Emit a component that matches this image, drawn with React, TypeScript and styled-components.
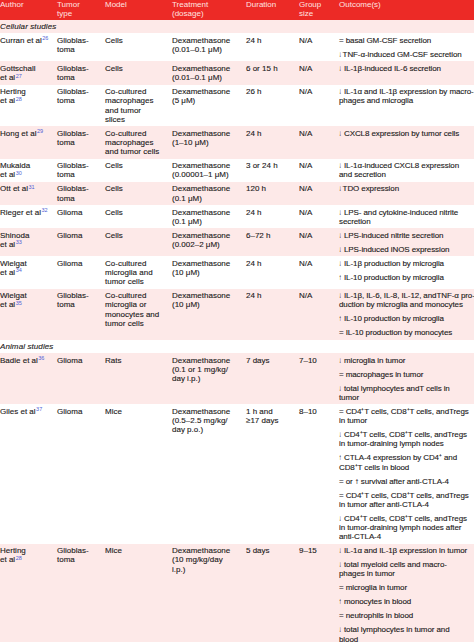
import React from 'react';
import styled, { createGlobalStyle } from 'styled-components';

const GlobalStyle = createGlobalStyle`
    html, body {
        margin: 0;
        padding: 0;
        background: #ffffff;
        overflow: hidden;
    }
    body {
        font-family: "Liberation Sans", Arial, sans-serif;
        color: #1c1a1a;
    }
`;

// shared column template so header and body rows line up
const COLUMNS = '57px 48px 67px 74px 53px 40px 1fr';

const Table = styled.div`
    width: 474px;
    font-size: 8px;
    line-height: 9.2px;
    -webkit-text-stroke: 0.12px currentColor;
`;

const HeaderRow = styled.div`
    display: grid;
    grid-template-columns: ${COLUMNS};
    background: #ec2a26;
    color: #ffe3e0;
    padding: 0 0 1.6px;
    -webkit-text-stroke: 0;
`;

const Row = styled.div<{ $shade: boolean }>`
    display: grid;
    grid-template-columns: ${COLUMNS};
    background: ${(p) => (p.$shade ? '#fde9e8' : '#ffffff')};
    padding: 2.5px 0 2.3px;
`;

const SectionRow = styled.div<{ $shade: boolean }>`
    background: ${(p) => (p.$shade ? '#fde9e8' : '#ffffff')};
    padding: 2.2px 0 2px;
    font-style: italic;
    letter-spacing: 0.1px;
`;

const Cell = styled.div`
    white-space: pre;
    padding-right: 3px;
`;

const Outcomes = styled.div`
    display: flex;
    flex-direction: column;
    gap: 4.8px;
    white-space: pre;
    letter-spacing: -0.1px;
`;

// up / down arrows are drawn narrow in the source typeface
const Sign = styled.span<{ $gap: boolean }>`
    display: inline-block;
    width: ${(p) => (p.$gap ? '5px' : '3.6px')};
    transform: scaleX(0.55);
    transform-origin: left center;
`;

const Ref = styled.span`
    font-size: 5.5px;
    line-height: 0;
    color: #4f5fd6;
    position: relative;
    top: -2.6px;
    margin-left: 0.5px;
    -webkit-text-stroke: 0;
`;

type Study = {
    author: string;
    ref: number;
    tumor: string;
    model: string;
    treatment: string;
    duration: string;
    group: string;
    outcomes: string[];
};

type Block = { section: string } | Study;

const rows: Block[] = [
    { section: 'Cellular studies' },
    {
        author: 'Curran et al', ref: 26, tumor: 'Glioblas-\ntoma', model: 'Cells',
        treatment: 'Dexamethasone\n(0.01–0.1 μM)', duration: '24 h', group: 'N/A',
        outcomes: ['= basal GM-CSF secretion', '↓TNF-α-induced GM-CSF secretion'],
    },
    {
        author: 'Gottschall\net al', ref: 27, tumor: 'Glioblas-\ntoma', model: 'Cells',
        treatment: 'Dexamethasone\n(0.01–0.1 μM)', duration: '6 or 15 h', group: 'N/A',
        outcomes: ['↓ IL-1β-induced IL-6 secretion'],
    },
    {
        author: 'Herting\net al', ref: 28, tumor: 'Glioblas-\ntoma',
        model: 'Co-cultured\nmacrophages\nand tumor\nslices',
        treatment: 'Dexamethasone\n(5 μM)', duration: '26 h', group: 'N/A',
        outcomes: ['↓ IL-1α and IL-1β expression by macro-\nphages and microglia'],
    },
    {
        author: 'Hong et al', ref: 29, tumor: 'Glioblas-\ntoma',
        model: 'Co-cultured\nmacrophages\nand tumor cells',
        treatment: 'Dexamethasone\n(1–10 μM)', duration: '24 h', group: 'N/A',
        outcomes: ['↓ CXCL8 expression by tumor cells'],
    },
    {
        author: 'Mukaida\net al', ref: 30, tumor: 'Glioblas-\ntoma', model: 'Cells',
        treatment: 'Dexamethasone\n(0.00001–1 μM)', duration: '3 or 24 h', group: 'N/A',
        outcomes: ['↓ IL-1α-induced CXCL8 expression\nand secretion'],
    },
    {
        author: 'Ott et al', ref: 31, tumor: 'Glioblas-\ntoma', model: 'Cells',
        treatment: 'Dexamethasone\n(0.1 μM)', duration: '120 h', group: 'N/A',
        outcomes: ['↓TDO expression'],
    },
    {
        author: 'Rieger et al', ref: 32, tumor: 'Glioma', model: 'Cells',
        treatment: 'Dexamethasone\n(0.1 μM)', duration: '24 h', group: 'N/A',
        outcomes: ['↓ LPS- and cytokine-induced nitrite\nsecretion'],
    },
    {
        author: 'Shinoda\net al', ref: 33, tumor: 'Glioma', model: 'Cells',
        treatment: 'Dexamethasone\n(0.002–2 μM)', duration: '6–72 h', group: 'N/A',
        outcomes: ['↓ LPS-induced nitrite secretion', '↓ LPS-induced iNOS expression'],
    },
    {
        author: 'Wielgat\net al', ref: 34, tumor: 'Glioma',
        model: 'Co-cultured\nmicroglia and\ntumor cells',
        treatment: 'Dexamethasone\n(10 μM)', duration: '24 h', group: 'N/A',
        outcomes: ['↓ IL-1β production by microglia', '↑ IL-10 production by microglia'],
    },
    {
        author: 'Wielgat\net al', ref: 35, tumor: 'Glioblas-\ntoma',
        model: 'Co-cultured\nmicroglia or\nmonocytes and\ntumor cells',
        treatment: 'Dexamethasone\n(10 μM)', duration: '24 h', group: 'N/A',
        outcomes: [
            '↓ IL-1β, IL-6, IL-8, IL-12, andTNF-α pro-\nduction by microglia and monocytes',
            '↑ IL-10 production by microglia',
            '= IL-10 production by monocytes',
        ],
    },
    { section: 'Animal studies' },
    {
        author: 'Badie et al', ref: 36, tumor: 'Glioma', model: 'Rats',
        treatment: 'Dexamethasone\n(0.1 or 1 mg/kg/\nday i.p.)', duration: '7 days', group: '7–10',
        outcomes: [
            '↓ microglia in tumor',
            '= macrophages in tumor',
            '↓ total lymphocytes andT cells in\ntumor',
        ],
    },
    {
        author: 'Giles et al', ref: 37, tumor: 'Glioma', model: 'Mice',
        treatment: 'Dexamethasone\n(0.5–2.5 mg/kg/\nday p.o.)', duration: '1 h and\n≥17 days', group: '8–10',
        outcomes: [
            '= CD4⁺T cells, CD8⁺T cells, andTregs\nin tumor',
            '↓ CD4⁺T cells, CD8⁺T cells, andTregs\nin tumor-draining lymph nodes',
            '↑ CTLA-4 expression by CD4⁺ and\nCD8⁺T cells in blood',
            '= or ↑ survival after anti-CTLA-4',
            '= CD4⁺T cells, CD8⁺T cells, andTregs\nin tumor after anti-CTLA-4',
            '↓ CD4⁺T cells, CD8⁺T cells, andTregs\nin tumor-draining lymph nodes after\nanti-CTLA-4',
        ],
    },
    {
        author: 'Herting\net al', ref: 28, tumor: 'Glioblas-\ntoma', model: 'Mice',
        treatment: 'Dexamethasone\n(10 mg/kg/day\ni.p.)', duration: '5 days', group: '9–15',
        outcomes: [
            '↓ IL-1α and IL-1β expression in tumor',
            '↓ total myeloid cells and macro-\nphages in tumor',
            '= microglia in tumor',
            '↑ monocytes in blood',
            '= neutrophils in blood',
            '↓ total lymphocytes in tumor and\nblood',
        ],
    },
];

const headers = ['Author', 'Tumor\ntype', 'Model', 'Treatment\n(dosage)', 'Duration', 'Group\nsize', 'Outcome(s)'];

// pull a leading arrow off an outcome so it can be drawn narrow
const Outcome: React.FC<{ text: string }> = ({ text }) => {
    const first = text[0];
    if (first === '↓' || first === '↑') {
        const spaced = text[1] === ' ';
        return (
            <span>
                <Sign $gap={spaced}>{first}</Sign>
                {text.slice(spaced ? 2 : 1)}
            </span>
        );
    }
    return <span>{text}</span>;
};

const App: React.FC = () => {
    return (
        <>
            <GlobalStyle />
            <Table>
                <HeaderRow>
                    {headers.map((h) => (
                        <Cell key={h}>{h}</Cell>
                    ))}
                </HeaderRow>
                {rows.map((r, i) => {
                    const shade = i % 2 === 0;
                    if ('section' in r) {
                        return (
                            <SectionRow key={r.section} $shade={shade}>
                                {r.section}
                            </SectionRow>
                        );
                    }
                    return (
                        <Row key={`${r.author}-${r.ref}`} $shade={shade}>
                            <Cell>
                                {r.author}
                                <Ref>{r.ref}</Ref>
                            </Cell>
                            <Cell>{r.tumor}</Cell>
                            <Cell>{r.model}</Cell>
                            <Cell>{r.treatment}</Cell>
                            <Cell>{r.duration}</Cell>
                            <Cell>{r.group}</Cell>
                            <Outcomes>
                                {r.outcomes.map((o) => (
                                    <Outcome key={o} text={o} />
                                ))}
                            </Outcomes>
                        </Row>
                    );
                })}
            </Table>
        </>
    );
};

export default App;
